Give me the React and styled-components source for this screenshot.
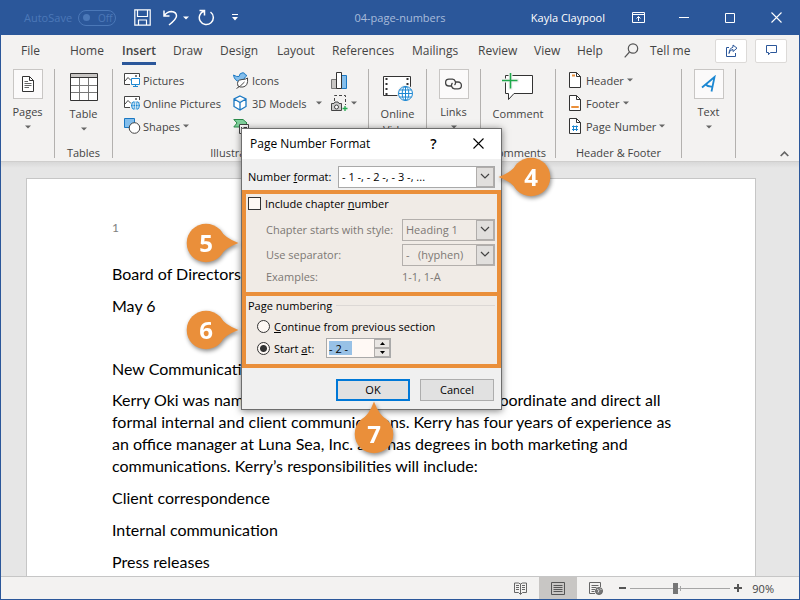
import React from "react";
import styled, { createGlobalStyle, css } from "styled-components";

const ORANGE = "#ea8f3a";
const BLUE = "#2b579a";

const Global = createGlobalStyle`
  * { box-sizing: border-box; }
  body { margin: 0; }
  body, button, input, select { font-family: "Open Sans", "Noto Sans", sans-serif; font-size: 11px; }
  button { margin: 0; padding: 0; border: 0; background: none; color: inherit; }
  svg { display: block; flex: none; }
`;

const Window = styled.div`
  position: relative;
  display: flex;
  flex-direction: column;
  height: 100vh;
  overflow: hidden;
  border: 1px solid ${BLUE};
  border-top: 0;
  background: #f3f2f1;
  color: #444;
  white-space: nowrap;
`;

/* title bar */
const TitleBar = styled.header`
  display: grid;
  grid-template-columns: 1fr auto 1fr;
  align-items: center;
  height: 35px;
  flex: none;
  background: ${BLUE};
  color: #fff;
`;
const QuickAccess = styled.div`
  display: flex;
  align-items: center;
  padding-left: 23px;
`;
const AutoSave = styled.label`
  display: flex;
  align-items: center;
  gap: 6px;
  width: 110px;
  color: #4b78b8;
`;
const Toggle = styled.button`
  display: flex;
  align-items: center;
  gap: 8px;
  width: 38px;
  height: 16px;
  padding-left: 4px;
  border: 1px solid #4b78b8;
  border-radius: 8px;
  font-size: 10px;
  &::before { content: ""; width: 7px; height: 7px; border-radius: 50%; background: #4b78b8; }
`;
const BarButton = styled.button`
  display: flex;
  align-items: center;
  justify-content: ${(p) => (p.$center ? "center" : "flex-start")};
  width: ${(p) => p.$w}px;
  height: 34px;
`;
const FileName = styled.h1`
  margin: 0;
  font-size: 11px;
  font-weight: 400;
  color: #a9bcda;
`;
const WindowControls = styled.div`
  display: flex;
  align-items: center;
  justify-content: flex-end;
`;
const UserName = styled.span`
  margin-right: 10px;
`;

/* tabs */
const Tabs = styled.nav`
  display: flex;
  align-items: center;
  height: 31px;
  flex: none;
  padding-left: 20px;
  font-size: 12px;
`;
const Tab = styled.button`
  width: ${(p) => p.$w}px;
  height: 28px;
  font-size: 12px;
  text-align: left;
  ${(p) => p.$active && css`font-weight: 600;`}
  span {
    display: inline-block;
    height: 28px;
    line-height: 28px;
    ${(p) => p.$active && css`border-bottom: 3px solid ${BLUE};`}
  }
`;
const TellMe = styled.button`
  display: flex;
  align-items: center;
  gap: 11px;
  font-size: 12px;
`;
const TabActions = styled.div`
  display: flex;
  gap: 8px;
  margin-left: auto;
  padding-right: 12px;
`;
const WhiteButton = styled.button`
  display: flex;
  align-items: center;
  justify-content: center;
  width: 32px;
  height: 24px;
  border: 1px solid #dcdad8;
  border-radius: 2px;
  background: #fff;
`;

/* ribbon */
const Ribbon = styled.section`
  display: flex;
  height: 95px;
  flex: none;
  padding-top: 3px;
`;
const Group = styled.div`
  display: flex;
  flex-direction: column;
  align-items: center;
  justify-content: space-between;
  width: ${(p) => p.$w}px;
  height: 89px;
  flex: none;
  border-right: 1px solid #b3b1af;
`;
const GroupLabel = styled.div`
  height: 11px;
  line-height: 11px;
`;
const BigButton = styled.button`
  display: flex;
  flex-direction: column;
  align-items: center;
  line-height: 16px;
  padding-top: ${(p) => (p.$boxed ? 0 : 4)}px;
  gap: 5px;
`;
const IconBox = styled.span`
  display: flex;
  align-items: center;
  justify-content: center;
  width: 30px;
  height: 30px;
  border: 1px solid #c8c6c4;
  background: #fbfafa;
`;
const Columns = styled.div`
  display: flex;
  width: 100%;
  padding-left: ${(p) => p.$pad}px;
`;
const Column = styled.div`
  width: ${(p) => p.$w}px;
`;
const SmallButton = styled.button`
  display: flex;
  align-items: center;
  gap: 3px;
  height: 23px;
  padding-bottom: 1px;
`;
const IconSlot = styled.span`
  display: flex;
  width: ${(p) => p.$w || 16}px;
`;
const Spread = styled.span`
  margin-left: 6px;
`;
const Collapse = styled.button`
  margin: auto 10px 4px auto;
`;

/* document */
const Canvas = styled.main`
  flex: 1;
  min-height: 0;
  overflow: hidden;
  padding: 16px 43px 0 25px;
  border-top: 1px solid #cfcecd;
  background: linear-gradient(#d8d8d8, #e6e6e6 6px);
`;
const Page = styled.article`
  height: 100%;
  padding: 39px 84px 0 85px;
  border: 1px solid #c6c6c6;
  border-bottom: 0;
  background: #fff;
  color: #000;
  font-family: Lato, Carlito, sans-serif;
  font-size: 16px;
  line-height: 22px;
`;
const PageNo = styled.div`
  height: 45px;
  font-size: 12px;
  line-height: 20px;
  color: #7f7f7f;
`;
const Para = styled.p`
  margin: 0 0 ${(p) => p.$after || 10}px;
`;

/* status bar */
const StatusBar = styled.footer`
  display: flex;
  align-items: center;
  justify-content: flex-end;
  height: 23px;
  flex: none;
  padding-right: 25px;
  border-top: 1px solid #c6c6c6;
`;
const ViewButton = styled.button`
  display: flex;
  align-items: center;
  justify-content: center;
  width: 38px;
  height: 22px;
  background: ${(p) => (p.$on ? "#c8c6c4" : "none")};
`;
const ZoomStep = styled.button`
  display: flex;
  align-items: center;
  justify-content: center;
  width: 15px;
  height: 22px;
`;
const Slider = styled.input`
  appearance: none;
  width: 100px;
  height: 14px;
  margin: 0;
  background: linear-gradient(#a6a6a6, #a6a6a6) 0 7px / 100% 1px no-repeat,
    linear-gradient(#a6a6a6, #a6a6a6) 50px 5px / 1px 5px no-repeat;
  &::-webkit-slider-thumb {
    appearance: none;
    width: 5px;
    height: 11px;
    background: #767676;
  }
`;
const ZoomValue = styled.span`
  margin-left: 7px;
`;

/* dialog */
const Dialog = styled.form`
  position: absolute;
  left: 240px;
  top: 128px;
  width: 261px;
  border: 1px solid #6e6e6e;
  background: #f0f0f0;
  color: #000;
  box-shadow: 0 1px 7px rgba(0, 0, 0, 0.5);
`;
const DialogTitle = styled.div`
  display: flex;
  align-items: center;
  height: 30px;
  padding: 0 0 2px 8px;
  background: #fff;
  h2 { flex: 1; margin: 0; font-size: 12px; font-weight: 400; }
`;
const TitleButton = styled.button`
  display: flex;
  align-items: center;
  justify-content: center;
  width: 45px;
  height: 28px;
  font-size: 14px;
  font-weight: 600;
`;
const Field = styled.div`
  display: grid;
  grid-template-columns: ${(p) => p.$label}px 1fr;
  align-items: center;
  height: ${(p) => p.$h || 25}px;
  padding: 0 ${(p) => p.$right || 2}px 0 ${(p) => p.$left}px;
  color: ${(p) => (p.$off ? "#7c7874" : "#000")};
`;
const FormatRow = styled.div`
  padding: 4px 0 0;
`;
const ChapterFields = styled.div`
  padding-top: 4px;
`;
const Combo = styled.div`
  display: grid;
  grid-template-columns: 1fr 18px;
  height: 22px;
  border: 1px solid ${(p) => (p.$off ? "#b3afac" : "#a9a9a9")};
  background: ${(p) => (p.$off ? "#f0ebe6" : "#fff")};
  select {
    grid-area: 1 / 1 / 2 / 3;
    appearance: none;
    width: 100%;
    padding: 0 3px;
    border: 0;
    background: none;
    color: inherit;
    opacity: 1;
  }
`;
const Arrow = styled.span`
  grid-area: 1 / 2 / 2 / 3;
  display: flex;
  align-items: center;
  justify-content: center;
  border: 1px solid #b0adab;
  background: #e1dfdd;
  pointer-events: none;
`;
const Highlight = styled.section`
  height: ${(p) => p.$h}px;
  border: 4px solid ${ORANGE};
  ${(p) => p.$joined && css`border-top: 0;`}
  background: #f0ebe6;
`;
const Check = styled.label`
  display: flex;
  align-items: center;
  gap: ${(p) => p.$gap}px;
  height: ${(p) => p.$h}px;
  padding-left: ${(p) => p.$left}px;
  input {
    appearance: none;
    width: 13px;
    height: 13px;
    margin: 0;
    border: 1px solid #333;
    background: #fdf8f4;
  }
  input[type="radio"] { border-radius: 50%; }
  input[type="radio"]:checked {
    background: radial-gradient(#333 0 3px, #fdf8f4 4px);
  }
`;
const Legend = styled.h3`
  display: flex;
  align-items: center;
  gap: 4px;
  height: 19px;
  margin: 0 0 1px;
  padding: 0 2px;
  font-size: 11px;
  font-weight: 400;
  &::after { content: ""; flex: 1; height: 1px; background: #dcd8d5; }
`;
const StartRow = styled.div`
  display: grid;
  grid-template-columns: 80px 65px;
  align-items: center;
  height: 22px;
`;
const Spinner = styled.div`
  display: flex;
  height: 20px;
  border: 1px solid #a9a9a9;
  background: #fff9f5;
`;
const SpinText = styled.input`
  width: 23px;
  height: 14px;
  margin: 2px auto 0 2px;
  padding: 0;
  border: 0;
  background: #98c1e6;
`;
const SpinButtons = styled.div`
  display: grid;
  grid-template-rows: 9px 9px;
  width: 16px;
  button {
    display: flex;
    align-items: center;
    justify-content: center;
    border: 1px solid #b0adab;
    background: #e9e6e3;
  }
`;
const Actions = styled.div`
  display: flex;
  justify-content: flex-end;
  gap: 10px;
  padding: 11px 7px 8px;
`;
const Push = styled.button`
  width: 74px;
  height: 22px;
  padding-bottom: 1px;
  border: ${(p) => (p.$primary ? "2px solid #0078d7" : "1px solid #adadad")};
  background: #e1e1e1;
`;

/* numbered callouts float over the window */
const Pin = styled.div`
  position: absolute;
  left: ${(p) => p.$x}px;
  top: ${(p) => p.$y}px;
  display: grid;
  place-items: center;
  width: 40px;
  height: 40px;
  color: #fff;
  font-size: 24px;
  font-weight: 700;
  line-height: 40px;
  svg {
    grid-area: 1 / 1;
    overflow: visible;
    rotate: ${(p) => p.$turn}deg;
  }
  span { grid-area: 1 / 1; z-index: 1; }
  filter: drop-shadow(1px 2px 2px rgba(0, 0, 0, 0.45));
`;

const Callout = ({ n, x, y, turn }) => (
  <Pin $x={x} $y={y} $turn={turn}>
    <svg width="40" height="40" viewBox="0 0 40 40" fill={ORANGE}>
      <circle cx="20" cy="20" r="19.3" />
      <path d="M34 7 Q39 15 52.500 20 Q39 25 34 33Z" />
    </svg>
    <span>{n}</span>
  </Pin>
);

const Caret = ({ color = "#666" }) => (
  <svg width="6" height="4" viewBox="0 0 6 4"><path d="M0 0.500H6L3 3.500Z" fill={color} /></svg>
);
const Chevron = () => (
  <svg width="10" height="7" viewBox="0 0 10 7" fill="none" stroke="#444" strokeWidth="1.2"><path d="M1 1l4 4 4-4" /></svg>
);
const Doc = ({ children }) => (
  <svg width="12" height="16" viewBox="0 0 12 16" fill="#fff" stroke="#333">
    <path d="M.5.5H7.500L11.500 4.500V15.500H.5Z" /><path d="M7.500.5V4.500H11.500" fill="none" />{children}
  </svg>
);
const PageIcon = () => (
  <svg width="12" height="16" viewBox="0 0 12 16" fill="#fff" stroke="#333">
    <path d="M.5.5H7.500L11.500 4.500V15.500H.5Z" /><path d="M7.500.5V4.500H11.500" fill="none" /><path d="M2.500 5.500H6M2.500 7.500H9.500M2.500 9.500H9.500M2.500 11.500H7" stroke="#666" />
  </svg>
);
const TableIcon = () => (
  <svg width="28" height="28" viewBox="0 0 28 28" fill="none">
    <path d="M.5.5H27.500V27.500H.5Z" fill="#fff" /><path d="M1 1H27V5H1Z" fill="#c8c6c4" />
    <path d="M9.500 5V27M18.500 5V27M1 12.500H27M1 19.500H27" stroke="#777" />
    <path d="M.5.5H27.500V27.500H.5ZM1 4.500H27" stroke="#333" />
  </svg>
);
const Picture = ({ online }) => (
  <svg width="17" height="16" viewBox="0 0 17 16" fill="none">
    <path d="M6 12.500H.5V1.500H15.500V5" stroke="#444" fill="#fff" />
    <path d="M1 9L4 5.500 7 8.500" stroke="#444" /><circle cx="12" cy="4" r="1" fill="#555" />
    {online ? (
      <g><circle cx="11.500" cy="10.500" r="4.500" fill="#1b87d2" /><path d="M7.500 9H15.500M7.500 12H15.500M11.500 6V15M11 6Q7 10.500 11 15M12 6Q16 10.500 12 15" stroke="#fff" strokeWidth=".7" /></g>
    ) : (
      <g stroke="#1b87d2"><path d="M7.500 6.500H15.500V12.500H7.500Z" fill="#fff" /><path d="M11.500 13V15M9 14.500H14" /></g>
    )}
  </svg>
);
const Shapes = () => (
  <svg width="17" height="16" viewBox="0 0 17 16"><path d="M.5.5H10.500V9.500H.5Z" fill="#83beec" stroke="#1b78c2" /><circle cx="10.500" cy="10" r="5.300" fill="#fff" stroke="#444" /></svg>
);
const Leaf = () => (
  <svg width="16" height="17" viewBox="0 0 16 17">
    <path d="M.5 3Q3.500 5 6 4.500Q6.500.7 10 .7Q12 1 12.500 3L14 3.500 12.300 5Q11 9 6.500 9.500Q1.500 9 .5 3Z" fill="#83beec" stroke="#1b78c2" />
    <path d="M5 14Q3 8 9 7.500Q13 7.500 14.500 6Q15.500 14 10 15Q7 15.500 5 14Z" fill="#fff" stroke="#444" /><path d="M3.500 16.500Q8 14 11.500 10" fill="none" stroke="#444" />
  </svg>
);
const Cube = () => (
  <svg width="14" height="16" viewBox="0 0 14 16" fill="#fff" stroke="#1b78c2" strokeWidth="1.300"><path d="M7 1L13 4V11.500L7 15 1 11.500V4ZM1.500 4.300L7 7.500 12.500 4.300M7 7.500V14.500" /></svg>
);
const SmartArt = () => (
  <svg width="16" height="16" viewBox="0 0 16 16"><path d="M.8 1.500H10L14 5 10 9H.8L4 5Z" fill="#7fcf9b" stroke="#2a8a49" /><path d="M6.500 6.500H15.500V15.500H6.500Z" fill="#fff" stroke="#444" /><path d="M8 9.500H9M10.500 9.500H14M8 12.500H9M10.500 12.500H14" stroke="#444" /></svg>
);
const Chart = () => (
  <svg width="17" height="17" viewBox="0 0 17 17"><path d="M.5 7.500H5.500V16.500H.5Z" fill="#c8c6c4" stroke="#777" /><path d="M10.500 3.500H15.500V16.500H10.500Z" fill="#83beec" stroke="#1b78c2" /><path d="M5.500.5H10.500V16.500H5.500Z" fill="#fff" stroke="#333" /></svg>
);
const Screenshot = () => (
  <svg width="17" height="16" viewBox="0 0 17 16" fill="none"><path d="M3.500 6V.5H14.500V10" stroke="#444" strokeDasharray="3 2" /><path d="M.5 8.500H3L4 7H7L8 8.500H10.500V15.500H.5Z" fill="#ccc" stroke="#444" /><circle cx="5.500" cy="12" r="2" fill="#fff" stroke="#444" /><path d="M14 11V16M11.500 13.500H16.500" stroke="#1fa94c" strokeWidth="1.300" /></svg>
);
const VideoIcon = () => (
  <svg width="33" height="28" viewBox="-2 0 33 28" fill="none">
    <path d="M.5 3.500H27.500V22.500H.5Z" fill="#fff" stroke="#333" />
    <path d="M3.500 5V22M24.500 5V14" stroke="#333" strokeWidth="2" strokeDasharray="2 3" />
    <circle cx="22.500" cy="20.500" r="8.500" fill="#f3f2f1" />
    <g stroke="#1b87d2"><circle cx="22.500" cy="20.500" r="7" fill="#fff" /><ellipse cx="22.500" cy="20.500" rx="3.300" ry="7" /><path d="M15.500 20.500H29.500M16.500 17H28.500M16.500 24H28.500M22.500 13.500V27.500" /></g>
  </svg>
);
const LinkIcon = () => (
  <svg width="17" height="12" viewBox="0 0 17 12" fill="none" stroke="#444" strokeWidth="1.300"><path d="M6.500 8H4A3.400 3.400 0 0 1 4 1.200H7.500A3.400 3.400 0 0 1 9.500 7" /><path d="M10.500 4H13A3.400 3.400 0 0 1 13 10.800H9.500A3.400 3.400 0 0 1 7.500 5" /></svg>
);
const CommentIcon = () => (
  <svg width="31" height="28" viewBox="0 0 31 28" fill="none"><path d="M3.500 2.500H30.500V20.500H12L6.500 26.500V20.500H3.500Z" fill="#fff" stroke="#333" /><path d="M1 7.500H17M8.500-1V17" stroke="#f3f2f1" strokeWidth="4" /><path d="M0 7.500H15.500M8.500 0V15.500" stroke="#1fa94c" strokeWidth="1.600" /></svg>
);
const TextIcon = () => (
  <svg width="16" height="18" viewBox="0 0 16 18" fill="none" stroke="#1b87d2" strokeWidth="1.800"><path d="M1 12.500L13.500 2 10.500 16.500M4.500 9.500Q7 12 11.500 11.500" /></svg>
);

const TABS = [["File", 49], ["Home", 52], ["Insert", 51], ["Draw", 47], ["Design", 57], ["Layout", 55], ["References", 80], ["Mailings", 66], ["Review", 56], ["View", 43], ["Help", 47]];

function Header() {
  return (
    <TitleBar>
      <QuickAccess>
        <AutoSave>AutoSave<Toggle type="button">Off</Toggle></AutoSave>
        <BarButton $w={29} aria-label="Save">
          <svg width="17" height="17" viewBox="0 0 17 17" fill="none" stroke="#fff" strokeWidth="1.200"><path d="M.8.8H16.200V16.200H.8ZM3.500 1V7.500H13.500V1M4.500 16V11H12.500V16" /></svg>
        </BarButton>
        <BarButton $w={20} aria-label="Undo">
          <svg width="15" height="17" viewBox="0 0 15 17" fill="none" stroke="#fff" strokeWidth="1.500"><path d="M1 1.500V7H6.500M1 7Q4 2.500 8.500 2.500Q13.500 3 13.500 7Q13.500 10 6 16" /></svg>
        </BarButton>
        <BarButton $w={15} aria-label="Undo list"><Caret color="#fff" /></BarButton>
        <BarButton $w={34} aria-label="Redo">
          <svg width="17" height="17" viewBox="0 0 17 17" fill="none" stroke="#fff" strokeWidth="1.500"><path d="M1.500 1.500H6.500V6.500M6 2A7 7 0 1 0 12.500 3" /></svg>
        </BarButton>
        <BarButton $w={10} aria-label="Customize toolbar">
          <svg width="6" height="7" viewBox="0 0 6 7" fill="#fff"><path d="M0 0H6V1H0ZM0 3H6L3 6.500Z" /></svg>
        </BarButton>
      </QuickAccess>
      <FileName>04-page-numbers</FileName>
      <WindowControls>
        <UserName>Kayla Claypool</UserName>
        <BarButton $w={46} $center aria-label="Ribbon display options">
          <svg width="13" height="11" viewBox="0 0 13 11" fill="none" stroke="#fff"><path d="M.5.5H12.500V10.500H.5ZM.5 2.500H12.500M6.500 9V4.500M4.500 6.500L6.500 4.500 8.500 6.500" /></svg>
        </BarButton>
        <BarButton $w={46} $center aria-label="Minimize"><svg width="10" height="1"><path d="M0 .5H10" stroke="#fff" /></svg></BarButton>
        <BarButton $w={46} $center aria-label="Maximize"><svg width="10" height="10" fill="none"><path d="M.5.5H9.500V9.500H.5Z" stroke="#fff" /></svg></BarButton>
        <BarButton $w={46} $center aria-label="Close"><svg width="11" height="11"><path d="M.5.5L10.500 10.500M10.500.5L.5 10.500" stroke="#fff" strokeWidth="1.100" /></svg></BarButton>
      </WindowControls>
    </TitleBar>
  );
}

function TabBar() {
  return (
    <Tabs>
      {TABS.map(([name, w]) => (
        <Tab key={name} $w={w} $active={name === "Insert"}><span>{name}</span></Tab>
      ))}
      <TellMe>
        <svg width="15" height="15" viewBox="0 0 15 15" fill="none" stroke="#555" strokeWidth="1.200"><circle cx="9" cy="5.500" r="4.700" /><path d="M5.500 9L.7 14.300" /></svg>
        Tell me
      </TellMe>
      <TabActions>
        <WhiteButton aria-label="Share">
          <svg width="13" height="13" viewBox="0 0 13 13" fill="none" stroke={BLUE}><path d="M4 3.500H1.500V12.500H10.500V9M4 9.500Q4.500 5.500 8 5.500V7.500L12 4.200 8 1V3.200Q4.500 4 4 9.500Z" /></svg>
        </WhiteButton>
        <WhiteButton aria-label="Comments">
          <svg width="13" height="11" viewBox="0 0 13 11" fill="none" stroke={BLUE}><path d="M1.500.5H11.500V7.500H5.500L3.500 9.700V7.500H1.500Z" /></svg>
        </WhiteButton>
      </TabActions>
    </Tabs>
  );
}

function RibbonBar() {
  return (
    <Ribbon>
      <Group $w={54}><BigButton $boxed><IconBox><PageIcon /></IconBox>Pages<Caret /></BigButton></Group>
      <Group $w={58}><BigButton><TableIcon />Table<Caret /></BigButton><GroupLabel>Tables</GroupLabel></Group>
      <Group $w={256}>
        <Columns $pad={11}>
          <Column $w={109}>
            <SmallButton><IconSlot><Picture /></IconSlot>Pictures</SmallButton>
            <SmallButton><IconSlot><Picture online /></IconSlot>Online Pictures</SmallButton>
            <SmallButton><IconSlot><Shapes /></IconSlot>Shapes<Caret /></SmallButton>
          </Column>
          <Column $w={98}>
            <SmallButton><IconSlot><Leaf /></IconSlot>Icons</SmallButton>
            <SmallButton><IconSlot><Cube /></IconSlot>3D Models<Spread><Caret /></Spread></SmallButton>
            <SmallButton aria-label="SmartArt"><IconSlot><SmartArt /></IconSlot></SmallButton>
          </Column>
          <Column $w={36}>
            <SmallButton aria-label="Chart"><Chart /></SmallButton>
            <SmallButton aria-label="Screenshot"><Screenshot /><Caret /></SmallButton>
          </Column>
        </Columns>
        <GroupLabel>Illustrations</GroupLabel>
      </Group>
      <Group $w={58}><BigButton><VideoIcon /><span>Online<br />Video</span></BigButton></Group>
      <Group $w={54}><BigButton $boxed><IconBox><LinkIcon /></IconBox>Links<Caret /></BigButton></Group>
      <Group $w={75}><BigButton><CommentIcon />Comment</BigButton><GroupLabel>Comments</GroupLabel></Group>
      <Group $w={126}>
        <Columns $pad={13}>
          <Column $w={110}>
            <SmallButton><IconSlot $w={14}><Doc><path d="M3 3.500H6" stroke={ORANGE} strokeWidth="2" /></Doc></IconSlot>Header<Caret /></SmallButton>
            <SmallButton><IconSlot $w={14}><Doc><path d="M2.500 11.500H9.500V12.500H2.500Z" stroke={ORANGE} /></Doc></IconSlot>Footer<Caret /></SmallButton>
            <SmallButton><IconSlot $w={14}><Doc><path d="M4.500 7.500V13M7.500 7.500V13M3 8.500H9M3 11.500H9" stroke="#1b87d2" /></Doc></IconSlot>Page Number<Caret /></SmallButton>
          </Column>
        </Columns>
        <GroupLabel>Header &amp; Footer</GroupLabel>
      </Group>
      <Group $w={54}><BigButton $boxed><IconBox><TextIcon /></IconBox>Text<Caret /></BigButton></Group>
      <Collapse aria-label="Collapse the ribbon"><svg width="9" height="6" viewBox="0 0 9 6" fill="none" stroke="#666" strokeWidth="1.700"><path d="M.7 5L4.500 1.200 8.300 5" /></svg></Collapse>
    </Ribbon>
  );
}

function PageNumberDialog() {
  return (
    <Dialog onSubmit={(e) => e.preventDefault()}>
      <DialogTitle>
        <h2>Page Number Format</h2>
        <TitleButton type="button" aria-label="Help">?</TitleButton>
        <TitleButton type="button" aria-label="Close"><svg width="11" height="11"><path d="M.5.5L10.500 10.500M10.500.5L.5 10.500" stroke="#000" strokeWidth="1.100" /></svg></TitleButton>
      </DialogTitle>
      <FormatRow>
        <Field $label={90} $left={6} $right={6} $h={27}>
          <label htmlFor="fmt">Number <u>f</u>ormat:</label>
          <Combo><select id="fmt"><option>- 1 -, - 2 -, - 3 -, ...</option></select><Arrow><Chevron /></Arrow></Combo>
        </Field>
      </FormatRow>
      <Highlight $h={106}>
        <Check $gap={4} $h={19} $left={2}><input type="checkbox" /><span>Include chapter <u>n</u>umber</span></Check>
        <ChapterFields>
          <Field $label={136} $left={20} $off>
            <label htmlFor="sty">Chapter starts with style:</label>
            <Combo $off><select id="sty" disabled><option>Heading 1</option></select><Arrow><Chevron /></Arrow></Combo>
          </Field>
          <Field $label={136} $left={20} $off>
            <label htmlFor="sep">Use separator:</label>
            <Combo $off><select id="sep" disabled><option>-{"\u00a0\u00a0\u00a0"}(hyphen)</option></select><Arrow><Chevron /></Arrow></Combo>
          </Field>
          <Field $label={136} $left={20} $off $h={18}><span>Examples:</span><span>1-1, 1-A</span></Field>
        </ChapterFields>
      </Highlight>
      <Highlight $h={72} $joined>
        <Legend>Page numbering</Legend>
        <Check $gap={4} $h={21} $left={11}><input type="radio" name="num" /><span><u>C</u>ontinue from previous section</span></Check>
        <StartRow>
          <Check $gap={4} $h={21} $left={11}><input type="radio" name="num" defaultChecked /><span>Start <u>a</u>t:</span></Check>
          <Spinner>
            <SpinText aria-label="Start at" defaultValue="- 2 -" />
            <SpinButtons>
              <button type="button" aria-label="Up"><svg width="5" height="3"><path d="M0 3L2.500 0 5 3Z" /></svg></button>
              <button type="button" aria-label="Down"><svg width="5" height="3"><path d="M0 0H5L2.500 3Z" /></svg></button>
            </SpinButtons>
          </Spinner>
        </StartRow>
      </Highlight>
      <Actions><Push $primary>OK</Push><Push type="button">Cancel</Push></Actions>
    </Dialog>
  );
}

export default function App() {
  return (
    <Window>
      <Global />
      <Header />
      <TabBar />
      <RibbonBar />
      <Canvas>
        <Page>
          <PageNo>1</PageNo>
          <Para>Board of Directors</Para>
          <Para $after={41}>May 6</Para>
          <Para $after={9}>New Communications Director</Para>
          <Para>
            Kerry Oki was named communications director and to coordinate and direct all<br />
            formal internal and client communications. Kerry has four years of experience as<br />
            an office manager at Luna Sea, Inc. and has degrees in both marketing and<br />
            communications. Kerry’s responsibilities will include:
          </Para>
          <Para>Client correspondence</Para>
          <Para>Internal communication</Para>
          <Para>Press releases</Para>
        </Page>
      </Canvas>
      <StatusBar>
        <ViewButton aria-label="Read mode">
          <svg width="13" height="13" viewBox="0 0 13 13" fill="none" stroke="#666"><path d="M6.500 2L4.500 1H.5V10.500H4.500L6.500 12.500 8.500 10.500H12.500V1H8.500L6.500 2V12M2 3.500H5M2 5.500H5M2 7.500H5M8 3.500H11M8 5.500H11M8 7.500H11" /></svg>
        </ViewButton>
        <ViewButton $on aria-label="Print layout">
          <svg width="14" height="13" viewBox="0 0 14 13" fill="none" stroke="#555"><path d="M.5.5H13.500V12.500H.5ZM2.500 3.500H11.500M2.500 5.500H11.500M2.500 7.500H11.500M2.500 9.500H11.500" /></svg>
        </ViewButton>
        <ViewButton aria-label="Web layout">
          <svg width="14" height="13" viewBox="0 0 14 13" fill="none" stroke="#666"><path d="M6 11.500H.5V.5H11.500V5M2.500 3.500H9.500M2.500 5.500H7.500M2.500 7.500H6M2.500 9.500H5.500" /><circle cx="10" cy="9" r="3.500" fill="#777" /><path d="M8 7L10 8.500 9 10.500M11 6.500L12.500 8" stroke="#ddd" /></svg>
        </ViewButton>
        <ZoomStep aria-label="Zoom out"><svg width="7" height="2"><path d="M0 1H7" stroke="#555" strokeWidth="2" /></svg></ZoomStep>
        <Slider type="range" aria-label="Zoom" min="0" max="100" defaultValue="45" />
        <ZoomStep aria-label="Zoom in"><svg width="8" height="8"><path d="M0 4H8M4 0V8" stroke="#555" strokeWidth="2" /></svg></ZoomStep>
        <ZoomValue>90%</ZoomValue>
      </StatusBar>
      <PageNumberDialog />
      <Callout n={4} x={510} y={157} turn={180} />
      <Callout n={5} x={185} y={223} turn={0} />
      <Callout n={6} x={185} y={310} turn={0} />
      <Callout n={7} x={353} y={414} turn={270} />
    </Window>
  );
}
